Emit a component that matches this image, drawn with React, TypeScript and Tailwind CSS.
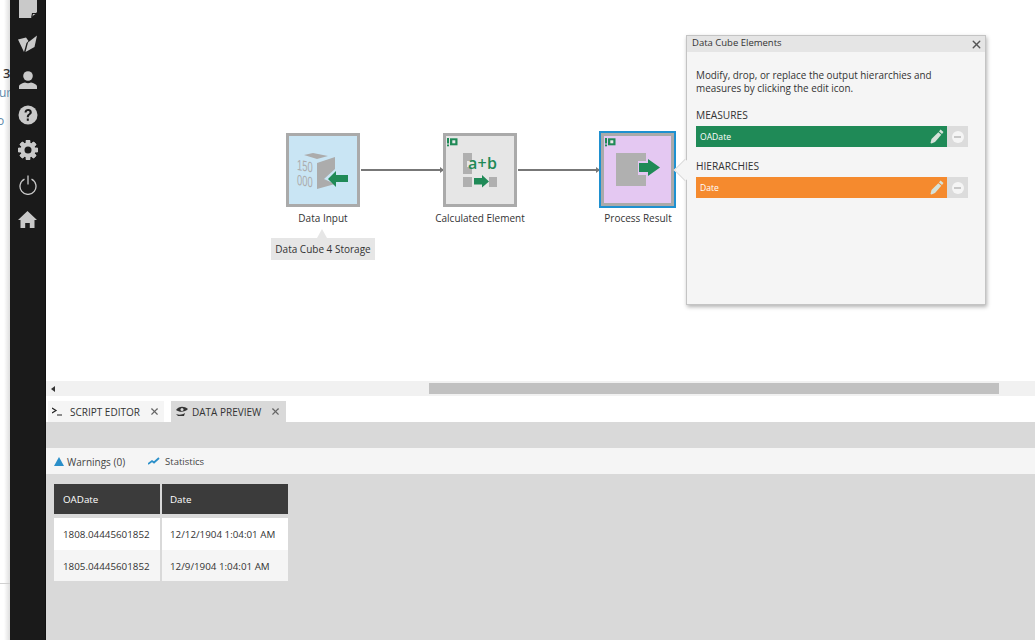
import { X } from 'lucide-react';
import type { ReactNode } from 'react';

function DocIcon() {
  return (
    <svg width="20" height="20" viewBox="0 0 20 20">
      <path d="M1 0h18v13l-6 6H1z" fill="#c9c9c9" />
      <path d="M13 19l1-5h5z" fill="#1a1a1a" />
      <path d="M14.500 17l.5-2h2.500z" fill="#c9c9c9" />
    </svg>
  );
}

function FolderIcon() {
  return (
    <svg width="20" height="18" viewBox="0 0 20 18">
      <path d="M0 4.500l8-2 2.500 3.500-2 2L6 17z" fill="#c9c9c9" />
      <path d="M7.500 17L10 7.500 19 0.500 16.500 12z" fill="#c9c9c9" />
    </svg>
  );
}

function UserIcon() {
  return (
    <svg width="18" height="18" viewBox="0 0 18 18">
      <circle cx="9" cy="5" r="4.800" fill="#c9c9c9" />
      <path d="M0 18v-2.500c0-2 3.500-3.500 6-4 1.800 1 4.200 1 6 0 2.500.5 6 2 6 4V18z" fill="#c9c9c9" />
    </svg>
  );
}

function HelpIcon() {
  return (
    <svg width="20" height="20" viewBox="0 0 20 20">
      <circle cx="10" cy="10" r="9.500" fill="#c9c9c9" />
      <path d="M6.500 7.500c0-4.500 7.300-4.500 7.300-.3 0 2.700-3 2.500-3 5h-2c0-3.400 2.800-3.200 2.800-4.900 0-1.700-3-1.600-3 .2z" fill="#1a1a1a" />
      <rect x="8.800" y="13.500" width="2" height="2.300" fill="#1a1a1a" />
    </svg>
  );
}

function GearIcon() {
  const teeth = [0, 45, 90, 135, 180, 225, 270, 315];
  return (
    <svg width="20" height="20" viewBox="0 0 20 20">
      {teeth.map((a) => (
        <rect key={a} x="7.800" y="0" width="4.400" height="20" rx="0.800" fill="#c9c9c9" transform={`rotate(${a} 10 10)`} />
      ))}
      <circle cx="10" cy="10" r="7.500" fill="#c9c9c9" />
      <circle cx="10" cy="10" r="3.500" fill="#1a1a1a" />
    </svg>
  );
}

function PowerIcon() {
  return (
    <svg width="20" height="20" viewBox="0 0 20 20" fill="none" stroke="#c9c9c9" strokeWidth="1.300">
      <path d="M6.500 4.200a8 8 0 1 0 7 0" />
      <path d="M10 0.500v9" />
    </svg>
  );
}

function HomeIcon() {
  return (
    <svg width="19" height="17" viewBox="0 0 19 17">
      <path d="M9.500 0L19 9h-2.500v8h-4.700v-5H7.200v5H2.500V9H0z" fill="#c9c9c9" />
    </svg>
  );
}

function PencilGlyph() {
  return (
    <svg width="14" height="15" viewBox="0 0 14 15">
      <path d="M10.500 0.500l3 2.500-1.500 2-3-2.500z" fill="#d6e2da" />
      <path d="M8.300 3.300l3 2.500L5 13 1.500 14.500 0.500 14l1-4z" fill="#d6e2da" />
    </svg>
  );
}

function Badge() {
  return (
    <svg width="14" height="11" viewBox="0 0 14 11" className="absolute left-0 top-[1px]">
      <rect x="1" y="1" width="2" height="5.500" fill="#1f8a57" />
      <rect x="1" y="7.500" width="2" height="1.800" fill="#1f8a57" />
      <rect x="4" y="1.300" width="7.500" height="7" fill="#1f8a57" />
      <rect x="6.300" y="3.300" width="3" height="3" fill="#e8e8e8" />
    </svg>
  );
}

function CubeGlyph() {
  return (
    <svg width="68" height="68" viewBox="0 0 68 68">
      <path d="M15 19l9-2 15 3-11 3z" fill="#acacac" />
      <path d="M28 27l18-6v12L35 43l11 5-18 5z" fill="#acacac" />
      <text transform="translate(8 34) skewY(9) scale(0.72 1.15)" fontSize="13" fill="#acacac" fontFamily="'Liberation Sans', sans-serif">150</text>
      <text transform="translate(8 49) skewY(9) scale(0.72 1.15)" fontSize="13" fill="#acacac" fontFamily="'Liberation Sans', sans-serif">000</text>
      <path d="M39 43l8-8v4h12v7H47v5z" fill="#1f8a57" />
    </svg>
  );
}

function CalcGlyph() {
  return (
    <svg width="68" height="68" viewBox="0 0 68 68">
      <path d="M17 17h9v8h-5v6h5v7h-9z" fill="#b0b0b0" />
      <rect x="17" y="41" width="9" height="10" fill="#b0b0b0" />
      <rect x="43" y="41" width="8" height="10" fill="#b0b0b0" />
      <text x="22" y="33" fontSize="16" fontWeight="600" textLength="29" fill="#1f8a57" fontFamily="'Open Sans', sans-serif">a+b</text>
      <path d="M28 42h8v-3l7 6.500-7 6v-3h-8z" fill="#1f8a57" />
    </svg>
  );
}

function ResultGlyph() {
  return (
    <svg width="67" height="67" viewBox="0 0 67 67">
      <path d="M12 17h30v8h-8v14h8v11H12z" fill="#b0b0b0" />
      <path d="M35 27h9v-4l12 8.500L44 40v-4h-9z" fill="#1f8a57" />
    </svg>
  );
}

function Node({ left, label, children, bg, active }: { left: string; label: string; children: ReactNode; bg: string; active?: boolean }) {
  return (
    <div className={`absolute top-[133px] flex w-[74px] flex-col items-center ${left}`}>
      <div
        className={`relative flex shrink-0 items-center justify-center border-[3px] border-[#aaaaaa] ${bg} ${
          active ? 'mb-[1px] mr-[1px] h-[73px] w-[73px] outline-2 outline-[#1e90d0]' : 'h-[74px] w-[74px]'
        }`}
      >
        {children}
      </div>
      <div className="mt-[4px] whitespace-nowrap text-[10px] leading-[14px] text-[#333]">{label}</div>
    </div>
  );
}

function Connector({ left, width }: { left: string; width: string }) {
  return (
    <div className={`absolute top-[169px] h-[2px] bg-[#777] ${left} ${width}`}>
      <div className="absolute -right-[1px] -top-[2px] h-0 w-0 border-y-[3px] border-l-[4px] border-y-transparent border-l-[#777]" />
    </div>
  );
}

function ElementRow({ label, color }: { label: string; color: string }) {
  return (
    <div className="flex h-[21px] bg-[#dcdcdc]">
      <div className={`flex w-[251px] items-center justify-between pl-[4px] pr-[3px] text-[8.600px] text-white ${color}`}>
        <span className="pt-[2px]">{label}</span>
        <PencilGlyph />
      </div>
      <div className="flex w-[21px] items-center justify-center">
        <div className="flex h-[12px] w-[12px] items-center justify-center rounded-full bg-[#f5f5f5]">
          <div className="h-[2px] w-[7px] bg-[#c8c8c8]" />
        </div>
      </div>
    </div>
  );
}

function SideSlot({ children, className = '' }: { children: ReactNode; className?: string }) {
  return <div className={`flex h-[35px] shrink-0 items-center justify-center ${className}`}>{children}</div>;
}

export default function App() {
  return (
    <div className="flex h-[640px] w-[1035px] overflow-hidden bg-white font-['Open_Sans','Noto_Sans',sans-serif] text-[#333]">
      {/* page behind, clipped */}
      <div className="relative h-full w-[10px] shrink-0 overflow-hidden bg-gradient-to-r from-white from-40% to-[#dedede]">
        <span className="absolute left-[3px] top-[64px] text-[13px] font-semibold text-[#333]">3</span>
        <span className="absolute -left-[1px] top-[84px] text-[12px] text-[#5d88a8]">ur</span>
        <span className="absolute -left-[3px] top-[112px] text-[12px] text-[#5d88a8]">o</span>
        <div className="absolute left-0 top-[583px] h-px w-full bg-[#d0d0d0]" />
      </div>

      {/* sidebar */}
      <div className="flex w-[36px] shrink-0 flex-col items-center border-r border-[#111] bg-[#1a1a1a]">
        <div className="-mt-[8px]" />
        <SideSlot className="-translate-y-[1px]"><DocIcon /></SideSlot>
        <SideSlot className="-translate-y-[1px]"><FolderIcon /></SideSlot>
        <SideSlot><UserIcon /></SideSlot>
        <SideSlot><HelpIcon /></SideSlot>
        <SideSlot><GearIcon /></SideSlot>
        <SideSlot><PowerIcon /></SideSlot>
        <SideSlot><HomeIcon /></SideSlot>
      </div>

      {/* main */}
      <div className="flex min-w-0 flex-1 flex-col">
        <div className="h-[381px] shrink-0" />
        <div className="flex h-[15px] shrink-0 items-center bg-[#f1f1f1] pl-[5px]">
          <div className="h-0 w-0 border-y-[3px] border-r-[4px] border-y-transparent border-r-[#333]" />
          <div className="ml-[374px] h-[11px] w-[570px] bg-[#c1c1c1]" />
        </div>
        <div className="flex h-[26px] shrink-0 gap-[7px] bg-white pl-[2px] pt-[5px] text-[10px]">
          <div className="flex w-[116px] items-center whitespace-nowrap bg-[#f5f5f5] pl-[4px]">
            <svg width="10" height="9" viewBox="0 0 10 9" fill="none" stroke="#222" strokeWidth="1.200">
              <path d="M0 1l4 2.500L0 6M5 8h5" />
            </svg>
            <span className="ml-[8px] pt-[2px]">SCRIPT EDITOR</span>
            <X size={11} className="ml-[9px] text-[#666]" strokeWidth={2.500} />
          </div>
          <div className="flex w-[115px] items-center whitespace-nowrap bg-[#d9d9d9] pl-[4px]">
            <svg width="14" height="11" viewBox="0 0 14 11">
              <path d="M1 4c3-4 8-4 12-1-3 3-8 4-12 1z" fill="#333" />
              <circle cx="7" cy="3.500" r="1.500" fill="#d9d9d9" />
              <path d="M1 8c3 1 6 1 9-1l-1 3H3z" fill="#333" />
            </svg>
            <span className="ml-[3px] pt-[2px]">DATA PREVIEW</span>
            <X size={11} className="ml-[9px] text-[#666]" strokeWidth={2.500} />
          </div>
        </div>
        <div className="h-[26px] shrink-0 bg-[#d9d9d9]" />
        <div className="flex h-[26px] shrink-0 items-center bg-[#f5f5f5] pl-[8px] text-[10px] text-[#444]">
          <svg width="10" height="9" viewBox="0 0 10 9">
            <path d="M5 0l5 9H0z" fill="#2a8fc9" />
          </svg>
          <span className="ml-[3px] pt-[2px]">Warnings (0)</span>
          <svg width="12" height="8" viewBox="0 0 12 8" className="ml-[23px]" fill="none" stroke="#2a8fc9" strokeWidth="1.800">
            <path d="M0 7l4-3 2 1.500L11 1" />
          </svg>
          <span className="ml-[5px] pt-[2px] text-[9.500px]">Statistics</span>
        </div>
        <div className="flex-1 bg-[#d9d9d9] pl-[8px] pt-[10px]">
          <div className="grid w-[234px] grid-cols-[106px_126px] gap-x-[2px] text-[9.800px]">
            <div className="flex h-[30px] items-center bg-[#3b3b3b] pl-[9px] pt-[2px] font-medium text-white">OADate</div>
            <div className="flex h-[30px] items-center bg-[#3b3b3b] pl-[8px] pt-[2px] font-medium text-white">Date</div>
            <div className="col-span-2 h-[4px]" />
            <div className="flex h-[32px] items-center bg-white pl-[9px] pt-[2px]">1808.04445601852</div>
            <div className="flex h-[32px] items-center bg-white pl-[8px] pt-[2px]">12/12/1904 1:04:01 AM</div>
            <div className="flex h-[31px] items-center bg-[#f5f5f5] pl-[9px] pt-[3px]">1805.04445601852</div>
            <div className="flex h-[31px] items-center bg-[#f5f5f5] pl-[8px] pt-[3px]">12/9/1904 1:04:01 AM</div>
          </div>
        </div>
      </div>

      {/* diagram canvas */}
      <Connector left="left-[361px]" width="w-[82px]" />
      <Connector left="left-[518px]" width="w-[81px]" />
      <Node left="left-[286px]" label="Data Input" bg="bg-[#c9e5f4]">
        <CubeGlyph />
      </Node>
      <Node left="left-[443px]" label="Calculated Element" bg="bg-[#e6e6e6]">
        <Badge />
        <CalcGlyph />
      </Node>
      <Node left="left-[601px]" label="Process Result" bg="bg-[#e4c8f2]" active>
        <Badge />
        <ResultGlyph />
      </Node>

      {/* input tooltip */}
      <div className="absolute left-[271px] top-[238px] flex h-[22px] w-[104px] items-center justify-center bg-[#e6e6e6] text-[10px]">
        <div className="absolute -top-[9px] left-[46px] h-0 w-0 border-x-[5px] border-b-[9px] border-x-transparent border-b-[#e6e6e6]" />
        Data Cube 4 Storage
      </div>

      {/* elements popup */}
      <div className="absolute left-[686px] top-[35px] h-[270px] w-[300px] border border-[#c4c4c4] bg-[#f5f5f5] shadow-[1px_2px_4px_rgba(0,0,0,0.3)]">
        <div className="absolute -left-[10px] top-[126px] h-[16px] w-[16px] rotate-45 border-b border-l border-[#dcdcdc] bg-[#f5f5f5]" />
        <div className="relative flex h-[16px] justify-between bg-[#e5e5e5] pl-[5px] pr-[2px] pt-[1px] text-[9.500px] leading-[12px]">
          <span>Data Cube Elements</span>
          <X size={13} strokeWidth={2.500} className="mt-[1px] text-[#555]" />
        </div>
        <div className="relative px-[9px] pr-[17px] pt-[17px]">
          <p className="text-[9.900px] leading-[13px]">
            Modify, drop, or replace the output hierarchies and measures by clicking the edit icon.
          </p>
          <div className="mt-[13px] text-[10.200px] leading-[14px]">MEASURES</div>
          <div className="mt-[4px]">
            <ElementRow label="OADate" color="bg-[#1f8a57]" />
          </div>
          <div className="mt-[12px] text-[10.200px] leading-[14px]">HIERARCHIES</div>
          <div className="mt-[4px]">
            <ElementRow label="Date" color="bg-[#f58a2e]" />
          </div>
        </div>
      </div>
    </div>
  );
}
